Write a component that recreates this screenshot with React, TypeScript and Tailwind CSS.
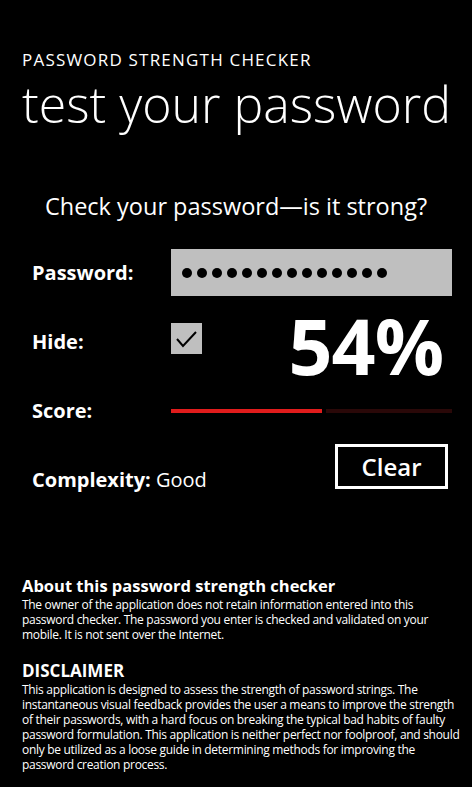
import React from "react";

export default function App() {
  const dots = Array.from({ length: 14 });
  return (
    <div
      className="w-[472px] h-[787px] bg-black text-white overflow-hidden"
      style={{ fontFamily: '"Open Sans", "Noto Sans", sans-serif' }}
    >
      <div className="pl-[22px] pt-[50px]">
        <div className="text-[17px] leading-[20px] tracking-[1.2px] whitespace-nowrap">PASSWORD STRENGTH CHECKER</div>
        <div className="text-[50px] font-light leading-[60px] mt-[4px] whitespace-nowrap">test your password</div>
      </div>
      <div className="text-center text-[23.5px] leading-[30px] mt-[57px] whitespace-nowrap">Check your password—is it strong?</div>

      <div className="pl-[32px] pr-[20px]">
        <div className="flex items-center mt-[28px]">
          <div className="w-[139px] text-[20px] font-bold">Password:</div>
          <div className="flex-1 h-[47px] bg-[#bfbfbf] flex items-center pl-[11px] gap-[5px]">
            {dots.map((_, i) => (
              <span key={i} className="w-[10px] h-[10px] rounded-full bg-black" />
            ))}
          </div>
        </div>

        <div className="flex items-start mt-[10px] h-[80px]">
          <div className="w-[139px] text-[20px] font-bold mt-[21px] leading-[30px]">Hide:</div>
          <div className="mt-[17px] w-[31px] h-[31px] bg-[#bfbfbf]">
            <svg width="31" height="31" viewBox="0 0 31 31" fill="none">
              <path d="M6 16 L12 23 L25 9" stroke="#000" strokeWidth="2" />
            </svg>
          </div>
          <div className="ml-auto pr-[9px] text-[77px] font-bold leading-[80px] tracking-[-1px]">54%</div>
        </div>

        <div className="flex items-center mt-[10px] h-[30px]">
          <div className="w-[139px] text-[20px] font-bold">Score:</div>
          <div className="flex-1 flex items-center gap-[4px] h-[4px]">
            <div className="h-[4px] w-[151px] bg-[#e01c1c]" />
            <div className="h-[4px] flex-1 bg-[#2a0808]" />
          </div>
        </div>

        <div className="flex items-start mt-[18px]">
          <div className="w-[139px] text-[20px] font-bold whitespace-nowrap mt-[21px] leading-[30px]">
            Complexity: <span className="font-normal">Good</span>
          </div>
          <div className="ml-auto mr-[4px] w-[113px] h-[45px] border-[3px] border-white flex items-center justify-center text-[24px] font-semibold">
            Clear
          </div>
        </div>
      </div>

      <div className="pl-[22px] pr-[16px] mt-[80px]">
        <div className="text-[16.5px] font-bold leading-[22px] whitespace-nowrap">About this password strength checker</div>
        <div className="text-[12px] leading-[15px] tracking-[-0.3px] whitespace-nowrap">
          <div>The owner of the application does not retain information entered into this</div>
          <div>password checker. The password you enter is checked and validated on your</div>
          <div>mobile. It is not sent over the Internet.</div>
        </div>
        <div className="text-[17px] font-bold leading-[22px] mt-[18px]">DISCLAIMER</div>
        <div className="text-[12px] leading-[15px] tracking-[-0.3px] whitespace-nowrap">
          <div>This application is designed to assess the strength of password strings. The</div>
          <div>instantaneous visual feedback provides the user a means to improve the strength</div>
          <div>of their passwords, with a hard focus on breaking the typical bad habits of faulty</div>
          <div>password formulation. This application is neither perfect nor foolproof, and should</div>
          <div>only be utilized as a loose guide in determining methods for improving the</div>
          <div>password creation process.</div>
        </div>
      </div>
    </div>
  );
}
